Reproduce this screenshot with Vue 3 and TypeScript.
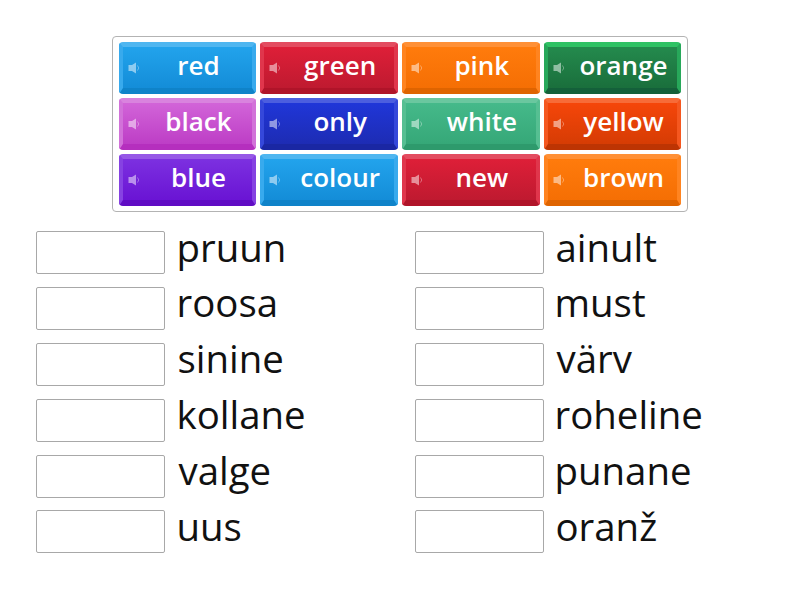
<script setup lang="ts">
interface Tile {
  word: string
  color: string
}

interface Answer {
  text: string
  shift: number
}

const tiles: Tile[] = [
  { word: 'red', color: 'sky' },
  { word: 'green', color: 'crimson' },
  { word: 'pink', color: 'amber' },
  { word: 'orange', color: 'forest' },
  { word: 'black', color: 'orchid' },
  { word: 'only', color: 'navy' },
  { word: 'white', color: 'mint' },
  { word: 'yellow', color: 'flame' },
  { word: 'blue', color: 'violet' },
  { word: 'colour', color: 'sky' },
  { word: 'new', color: 'crimson' },
  { word: 'brown', color: 'amber' },
]

const leftWords: Answer[] = [
  { text: 'pruun', shift: 0 },
  { text: 'roosa', shift: 0 },
  { text: 'sinine', shift: 1 },
  { text: 'kollane', shift: 0 },
  { text: 'valge', shift: 2 },
  { text: 'uus', shift: 0 },
]
const rightWords: Answer[] = [
  { text: 'ainult', shift: 0 },
  { text: 'must', shift: -1 },
  { text: 'värv', shift: 1 },
  { text: 'roheline', shift: -1 },
  { text: 'punane', shift: -1 },
  { text: 'oranž', shift: 0 },
]
</script>

<template>
  <main class="page">
    <section class="bank">
      <button v-for="tile in tiles" :key="tile.word" class="tile" :class="tile.color">
        <svg class="speaker" viewBox="0 0 12 12" width="12" height="12">
          <path d="M.5 3h3.500L8 .5v11L4 9H.5z" />
          <path class="wave" d="M9.500 3.500a3.500 3.500 0 0 1 0 5" />
        </svg>
        <span class="word">{{ tile.word }}</span>
      </button>
    </section>
    <section class="answers">
      <div class="column">
        <div v-for="item in leftWords" :key="item.text" class="row">
          <div class="slot"></div>
          <span class="label" :style="{ marginLeft: item.shift + 'px' }">{{ item.text }}</span>
        </div>
      </div>
      <div class="column">
        <div v-for="item in rightWords" :key="item.text" class="row">
          <div class="slot"></div>
          <span class="label" :style="{ marginLeft: item.shift + 'px' }">{{ item.text }}</span>
        </div>
      </div>
    </section>
  </main>
</template>

<style>
html,
body {
  background: #fff;
}
</style>

<style scoped>
.page {
  width: 800px;
  height: 600px;
  padding-top: 36px;
  box-sizing: border-box;
  font-family: "Open Sans", sans-serif;
  overflow: hidden;
}

.bank {
  width: 576px;
  height: 176px;
  margin-left: 112px;
  padding: 5px 5.700px;
  box-sizing: border-box;
  display: grid;
  grid-template-columns: repeat(4, 137.670px);
  grid-auto-rows: 52px;
  column-gap: 4px;
  row-gap: 4px;
  border: 1px solid #b3b3b3;
  border-radius: 4px;
}

.tile {
  position: relative;
  padding: 0;
  border-style: solid;
  border-width: 5px 4px 6px;
  border-radius: 4px;
  display: flex;
  align-items: center;
  font-family: inherit;
  color: #fff;
}

.speaker {
  position: absolute;
  left: 5px;
  top: 15px;
  fill: rgba(255, 255, 255, 0.5);
}

.wave {
  fill: none;
  stroke: rgba(255, 255, 255, 0.35);
  stroke-width: 1;
}

.word {
  flex: 1;
  padding-left: 22px;
  margin-top: -6px;
  text-align: center;
  font-size: 26px;
  font-weight: 600;
  line-height: 36px;
}

.sky {
  background: linear-gradient(#22a3ec, #148dd8);
  border-color: #4fb6f0 #38aaed #0f83c9;
}

.crimson {
  background: linear-gradient(#de1f38, #bf1a30);
  border-color: #e34c60 #e0364c #b01429;
}

.amber {
  background: linear-gradient(#ff7b0c, #f56f04);
  border-color: #ff9036 #ff8420 #df6400;
}

.forest {
  background: linear-gradient(#248a4d, #1a6f3c);
  border-color: #2fc264 #27a85a #14603a;
}

.orchid {
  background: linear-gradient(#d264d8, #bd3ec6);
  border-color: #d983de #d272d9 #b52fbe;
}

.navy {
  background: linear-gradient(#2036d8, #1d2cb4);
  border-color: #4c5edf #3548da #1a27a3;
}

.mint {
  background: linear-gradient(#45b98a, #36a878);
  border-color: #6ac79f #56bf92 #2e9a6c;
}

.flame {
  background: linear-gradient(#f5460a, #d63c04);
  border-color: #f76b38 #f5571f #bd3403;
}

.violet {
  background: linear-gradient(#7c30e0, #6a14d4);
  border-color: #9658e6 #8642e2 #600cc4;
}

.answers {
  margin-top: 19px;
  margin-left: 36px;
  display: flex;
}

.column {
  display: flex;
  flex-direction: column;
  width: 379px;
}

.row {
  display: flex;
  align-items: center;
  gap: 11.500px;
  height: 43px;
  margin-bottom: 12.900px;
}

.slot {
  width: 129px;
  height: 43px;
  box-sizing: border-box;
  border: 1px solid #a8a8a8;
  border-radius: 2px;
  background: #fff;
}

.label {
  font-size: 38.400px;
  line-height: 43px;
  margin-top: -11px;
  color: #111;
}
</style>
